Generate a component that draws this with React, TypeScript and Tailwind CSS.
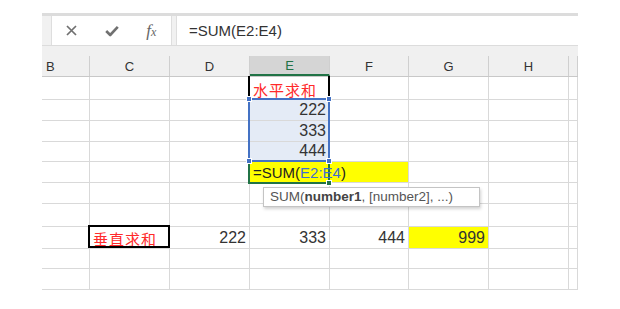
import React from "react";

const colW = [48, 80, 80, 80, 79, 80, 80, 9];
const letters = ["B", "C", "D", "E", "F", "G", "H", ""];
const rowH = [23, 21, 21, 20, 21, 21, 23, 22, 20, 21];

const SANS = { fontFamily: '"Liberation Sans", Arial, sans-serif' };
const CJK = { fontFamily: '"Noto Sans CJK SC", "Liberation Sans", sans-serif' };

type CellDef = { node?: React.ReactNode; bg?: string; align?: "left" | "right" };

function cellFor(r: number, c: number): CellDef {
  const key = `${r}-${c}`;
  const red = (t: string) => (
    <span className="text-[15px] leading-none tracking-[1px] text-[#ff2a2a]" style={CJK}>
      {t}
    </span>
  );
  const num = (t: string) => (
    <span className="text-[16px] leading-none text-[#333]" style={SANS}>
      {t}
    </span>
  );
  switch (key) {
    case "0-3":
      return { node: red("水平求和"), align: "left" };
    case "1-3":
      return { node: num("222"), align: "right", bg: "bg-[#e4ebf6]" };
    case "2-3":
      return { node: num("333"), align: "right", bg: "bg-[#e4ebf6]" };
    case "3-3":
      return { node: num("444"), align: "right", bg: "bg-[#e4ebf6]" };
    case "4-3":
      return {
        node: (
          <span className="relative z-[1] whitespace-nowrap text-[15px] leading-none text-[#222]" style={SANS}>
            =SUM(<span className="text-[#3f6fd0]">E2:E4</span>)
          </span>
        ),
        align: "left",
        bg: "bg-[#ffff00]",
      };
    case "4-4":
      return { bg: "bg-[#ffff00]" };
    case "7-1":
      return { node: red("垂直求和"), align: "left" };
    case "7-2":
      return { node: num("222"), align: "right" };
    case "7-3":
      return { node: num("333"), align: "right" };
    case "7-4":
      return { node: num("444"), align: "right" };
    case "7-5":
      return { node: num("999"), align: "right", bg: "bg-[#ffff00]" };
    default:
      return {};
  }
}

function Handle({ x, y, color }: { x: number; y: number; color: string }) {
  return (
    <div
      className="absolute h-[6px] w-[6px] border border-white"
      style={{ left: x - 3, top: y - 3, backgroundColor: color }}
    />
  );
}

export default function App() {
  return (
    <div className="h-[309px] w-[620px] overflow-hidden bg-white pl-[42px] pt-[13px]">
      <div className="w-[536px] overflow-hidden">
        {/* Formula bar */}
        <div className="flex h-[33px] border-t-[3px] border-b border-[#dcdcdc] bg-[#f1f1f1]">
          <div className="ml-[9px] flex h-[29px] w-[121px] items-center border-x border-[#dedede] bg-white">
            <div className="flex w-[40px] justify-center">
              <svg width="11" height="11" viewBox="0 0 11 11">
                <path d="M1 1 L10 10 M10 1 L1 10" stroke="#707070" strokeWidth="1.7" />
              </svg>
            </div>
            <div className="flex w-[40px] justify-center">
              <svg width="14" height="12" viewBox="0 0 14 12">
                <path d="M1.2 6 L5.2 10 L12.8 1.8" stroke="#707070" strokeWidth="2.6" fill="none" strokeLinejoin="round" />
              </svg>
            </div>
            <div className="flex w-[40px] justify-center">
              <span
                className="text-[17px] italic leading-none text-[#666]"
                style={{ fontFamily: '"Liberation Serif", "Times New Roman", serif' }}
              >
                f<span className="text-[12px]">x</span>
              </span>
            </div>
          </div>
          <div className="ml-[4px] flex h-[29px] flex-1 items-center border-l border-[#dedede] bg-white pl-[12px]">
            <span className="text-[15px] leading-none text-[#333]" style={SANS}>
              =SUM(E2:E4)
            </span>
          </div>
        </div>

        {/* header strip */}
        <div className="bg-[#f0f0f0] pt-[10px]">
          <div className="flex h-[21px] border-b border-[#c8c8c8]">
            {colW.map((w, i) => {
              const active = i === 3;
              return (
                <div
                  key={i}
                  className={`flex shrink-0 items-center border-r border-[#cfcfcf] ${
                    i === 0 ? "justify-start pl-[4px]" : "justify-center"
                  } ${active ? "border-b-2 border-b-[#217346] bg-[#d5d5d5] text-[#217346]" : "text-[#333]"}`}
                  style={{ width: w }}
                >
                  <span className="text-[13px] leading-none" style={SANS}>
                    {letters[i]}
                  </span>
                </div>
              );
            })}
          </div>
        </div>

        {/* grid */}
        <div className="relative">
          {rowH.map((h, r) => (
            <div key={r} className="flex" style={{ height: h }}>
              {colW.map((w, c) => {
                const d = cellFor(r, c);
                return (
                  <div
                    key={c}
                    className={`flex shrink-0 items-end border-b border-r border-[#d9d9d9] pb-[2px] ${
                      d.align === "right" ? "justify-end pr-[3px]" : "justify-start pl-[3px]"
                    } ${d.bg ?? ""}`}
                    style={{ width: w }}
                  >
                    {d.node}
                  </div>
                );
              })}
            </div>
          ))}

          {/* E1 black side borders */}
          <div className="absolute left-[206px] top-[-1px] h-[23px] w-[82px] border-x-2 border-black" />

          {/* active cell E5 */}
          <div className="absolute left-[206px] top-[83px] h-[24px] w-[82px] border-2 border-[#217346]" />
          <Handle x={287} y={106} color="#217346" />

          {/* selection E2:E4 */}
          <div className="absolute left-[206px] top-[21px] h-[64px] w-[82px] border-2 border-[#4472c4]" />
          <Handle x={207} y={22} color="#4472c4" />
          <Handle x={287} y={22} color="#4472c4" />
          <Handle x={207} y={84} color="#4472c4" />
          <Handle x={287} y={84} color="#4472c4" />

          {/* tooltip */}
          <div className="absolute left-[221px] top-[110px] flex h-[20px] w-[217px] items-center border border-[#c4c4c4] bg-white pl-[6px] shadow-[1px_2px_3px_rgba(0,0,0,0.18)]">
            <span className="whitespace-nowrap text-[13.5px] leading-none text-[#555]" style={SANS}>
              SUM(<span className="font-bold text-[#444]">number1</span>, [number2], ...)
            </span>
          </div>

          {/* C8 thick border */}
          <div className="absolute left-[46px] top-[148px] h-[23px] w-[82px] border-2 border-black" />
        </div>
      </div>
    </div>
  );
}
